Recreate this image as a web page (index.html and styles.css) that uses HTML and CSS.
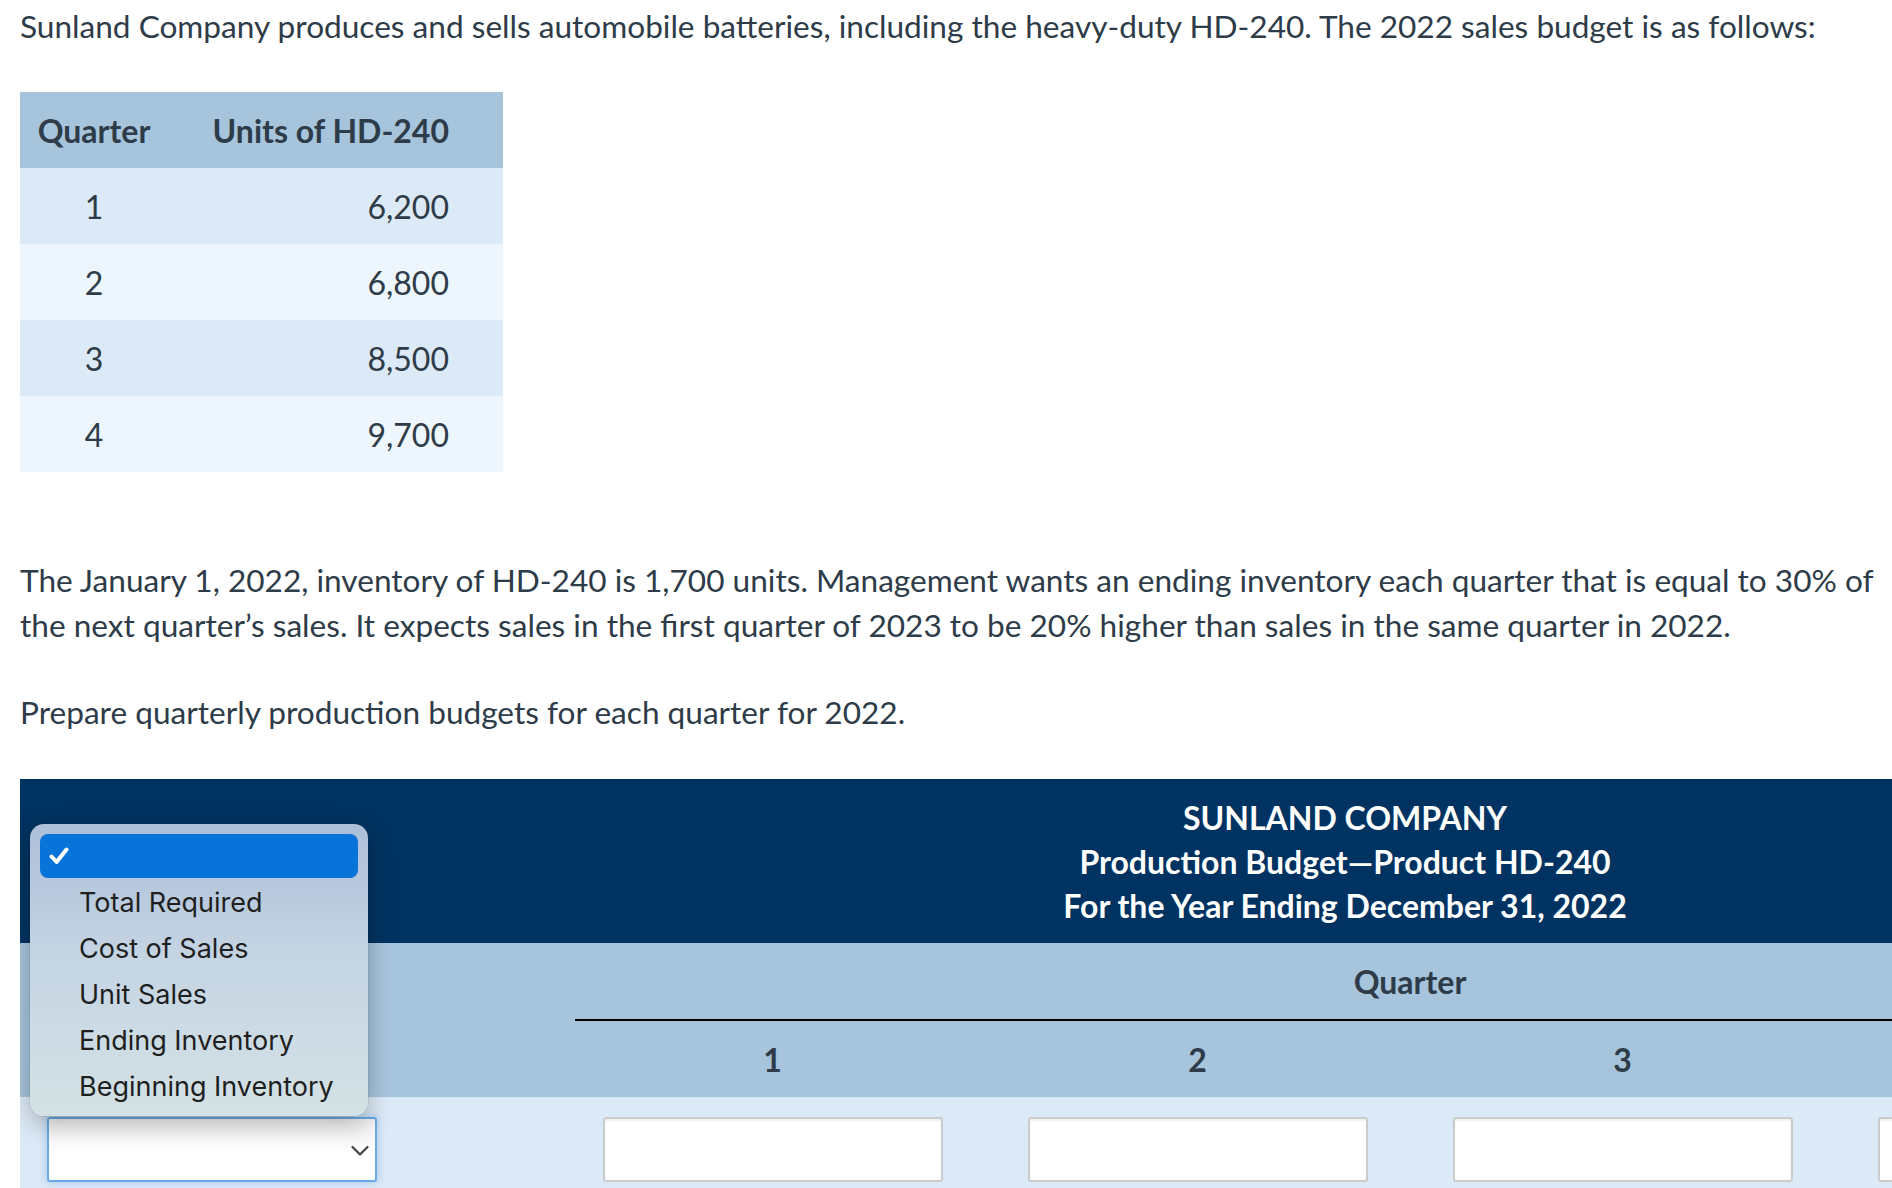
FILE: index.html
```html
<!DOCTYPE html>
<html lang="en">
<head>
  <meta charset="UTF-8">
  <meta name="viewport" content="width=device-width, initial-scale=1.0">
  <title>Production Budget</title>
  <link rel="stylesheet" href="styles.css">
</head>
<body>
  <div class="page">
    <p class="intro">Sunland Company produces and sells automobile batteries, including the heavy-duty HD-240. The 2022 sales budget is as follows:</p>

    <table class="sales">
      <thead>
        <tr>
          <th class="q-col">Quarter</th>
          <th class="u-col">Units of HD-240</th>
        </tr>
      </thead>
      <tbody>
        <tr><td class="q-col">1</td><td class="u-col">6,200</td></tr>
        <tr><td class="q-col">2</td><td class="u-col">6,800</td></tr>
        <tr><td class="q-col">3</td><td class="u-col">8,500</td></tr>
        <tr><td class="q-col">4</td><td class="u-col">9,700</td></tr>
      </tbody>
    </table>

    <p class="info">The January 1, 2022, inventory of HD-240 is 1,700 units. Management wants an ending inventory each quarter that is equal to 30% of the next quarter’s sales. It expects sales in the first quarter of 2023 to be 20% higher than sales in the same quarter in 2022.</p>

    <p class="task">Prepare quarterly production budgets for each quarter for 2022.</p>

    <div class="budget-wrap">
      <table class="budget">
        <colgroup>
          <col class="label-col">
          <col class="qtr-col">
          <col class="qtr-col">
          <col class="qtr-col">
          <col class="qtr-col">
          <col class="year-col">
        </colgroup>
        <thead>
          <tr class="title-row">
            <th colspan="6">
              SUNLAND COMPANY<br>
              Production Budget—Product HD-240<br>
              For the Year Ending December 31, 2022
            </th>
          </tr>
          <tr class="quarter-row">
            <th rowspan="2"></th>
            <th class="quarter-span" colspan="4"><div class="quarter-line">Quarter</div></th>
            <th rowspan="2"></th>
          </tr>
          <tr class="num-row">
            <th>1</th>
            <th>2</th>
            <th>3</th>
            <th>4</th>
          </tr>
        </thead>
        <tbody>
          <tr class="entry-row">
            <td class="label-cell">
              <div class="select-wrap">
                <div class="menu">
                  <div class="menu-item selected">
                    <svg class="check" width="20" height="18" viewBox="0 0 20 18"><path d="M2.5 9.5 L7.5 15 L17.5 2.5" fill="none" stroke="#fff" stroke-width="4" stroke-linecap="round" stroke-linejoin="round"/></svg>
                  </div>
                  <div class="menu-item">Total Required</div>
                  <div class="menu-item">Cost of Sales</div>
                  <div class="menu-item">Unit Sales</div>
                  <div class="menu-item">Ending Inventory</div>
                  <div class="menu-item">Beginning Inventory</div>
                </div>
                <div class="select-box">
                  <svg class="chevron" width="18" height="12" viewBox="0 0 18 12"><path d="M1.5 2 L9 9.5 L16.5 2" fill="none" stroke="#444" stroke-width="2.2" stroke-linecap="round" stroke-linejoin="round"/></svg>
                </div>
              </div>
            </td>
            <td><input type="text" class="amount"></td>
            <td><input type="text" class="amount"></td>
            <td><input type="text" class="amount"></td>
            <td><input type="text" class="amount"></td>
            <td><input type="text" class="amount"></td>
          </tr>
        </tbody>
      </table>
    </div>
  </div>
</body>
</html>
```

FILE: styles.css
```css
html {
  overflow: hidden;
}
body {
  margin: 0;
  font-family: Lato, "Open Sans", sans-serif;
  color: #2e3b48;
  background: #fff;
}
.page {
  padding: 4px 0 0 20px;
}
p {
  margin: 0;
  font-size: 31.6px;
  line-height: 45px;
}
.intro {
  margin-bottom: 43px;
}
.info {
  margin-bottom: 42px;
}
.task {
  margin-bottom: 44px;
}

/* sales table */
.sales {
  border-collapse: collapse;
  width: 483px;
  margin-bottom: 86px;
  font-size: 32px;
}
.sales th,
.sales td {
  height: 76px;
  padding: 0;
}
.sales th {
  background-color: #a6c4dc;
  font-weight: bold;
}
.sales tbody tr:nth-child(odd) {
  background-color: #dce9f6;
}
.sales tbody tr:nth-child(even) {
  background-color: #edf5fd;
}
.sales .q-col {
  width: 148px;
  text-align: center;
}
.sales .u-col {
  text-align: right;
  padding-right: 54px;
}

/* production budget */
.budget-wrap {
  overflow: hidden;
}
.budget {
  border-collapse: collapse;
  table-layout: fixed;
  width: 2650px;
  font-size: 32px;
}
.budget .label-col {
  width: 540px;
}
.budget .qtr-col {
  width: 425px;
}
.budget .year-col {
  width: 410px;
}
.budget th,
.budget td {
  padding: 0;
}
.title-row th {
  background-color: #003361;
  color: #fff;
  font-weight: bold;
  line-height: 44px;
  padding: 17px 0 15px;
  text-align: center;
}
.quarter-row th,
.num-row th {
  background-color: #a6c4dc;
  font-weight: bold;
}
.budget th.quarter-span {
  padding: 0 15px;
}
.quarter-line {
  height: 76px;
  line-height: 78px;
  border-bottom: 2px solid #000;
}
.num-row th {
  height: 76px;
  text-align: center;
}
.entry-row td {
  background-color: #dce9f6;
  padding: 20px 0;
  text-align: center;
  vertical-align: top;
}
.budget td.label-cell {
  text-align: left;
  padding-left: 27px;
}
.amount {
  box-sizing: border-box;
  width: 340px;
  height: 65px;
  border: 2px solid #cbcbcb;
  border-radius: 3px;
  box-shadow: inset 0 2px 2px rgba(0, 0, 0, 0.06);
  background: #fff;
  font-size: 28px;
}

/* select with its open menu */
.select-wrap {
  position: relative;
  width: 330px;
}
.select-box {
  box-sizing: border-box;
  height: 65px;
  border: 2px solid #67a9e6;
  border-radius: 3px;
  background: linear-gradient(#f1f1f1, #fff 60%);
  box-shadow: 0 0 6px 2px rgba(110, 170, 235, 0.35);
  display: flex;
  align-items: center;
  justify-content: flex-end;
  padding-right: 6px;
}
.chevron {
  margin-top: 2px;
}
.menu {
  position: absolute;
  left: -17px;
  bottom: calc(100% + 1px);
  width: 338px;
  box-sizing: border-box;
  padding: 10px 0 6px;
  border-radius: 14px;
  background: linear-gradient(#adbfd9, #c4d4e3 45%, #d4e2e5);
  box-shadow: 0 8px 24px rgba(0, 0, 0, 0.25), 0 0 0 1px rgba(0, 0, 0, 0.06);
  font-family: Inter, "Noto Sans", sans-serif;
  font-size: 27px;
  color: #1f1f1f;
  z-index: 2;
}
.menu-item {
  height: 46px;
  line-height: 46px;
  padding-left: 49px;
  white-space: nowrap;
}
.menu-item.selected {
  height: 44px;
  margin: 0 10px 2px;
  padding-left: 9px;
  border-radius: 8px;
  background-color: #0873d9;
  display: flex;
  align-items: center;
}
```
